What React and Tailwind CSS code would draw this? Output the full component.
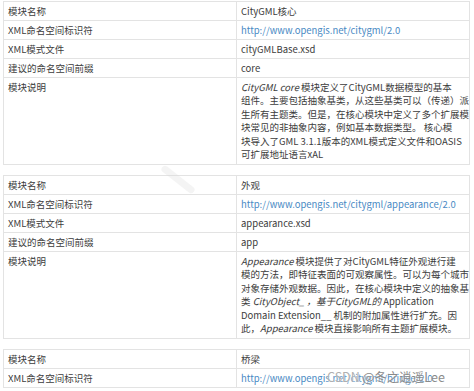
import React from "react";

const Row = ({ label, children, last }) => (
  <div className={`grid grid-cols-[233px_232px] ${last ? "" : "border-b border-[#e3e3e3]"}`}>
    <div className="border-r border-[#e3e3e3] px-[4px] h-[18px] leading-[18px] whitespace-nowrap">{label}</div>
    <div className="px-[4px] h-[18px] leading-[18px] whitespace-nowrap">{children}</div>
  </div>
);

const DescRow = ({ lines }) => (
  <div className="grid grid-cols-[233px_232px]">
    <div className="border-r border-[#e3e3e3] px-[4px] pt-[3px] leading-[13.5px] whitespace-nowrap">模块说明</div>
    <div className="px-[4px] py-[2.5px] leading-[13.5px]">
      {lines.map((l, i) => (
        <div key={i} className="whitespace-nowrap">{l}</div>
      ))}
    </div>
  </div>
);

const Link = ({ children }) => <span className="text-[#4a8ac4]">{children}</span>;

export default function App() {
  return (
    <div className="relative w-[474px] h-[391px] overflow-hidden bg-white font-['Noto_Sans_CJK_SC',sans-serif] text-[9.5px] text-[#3c3c3c]">
      <div className="pt-[1px] pl-[3px] flex flex-col gap-[10px]">
        <div className="w-[467px] border border-[#e3e3e3]">
          <Row label="模块名称">CityGML核心</Row>
          <Row label="XML命名空间标识符"><Link>http://www.opengis.net/citygml/2.0</Link></Row>
          <Row label="XML模式文件">cityGMLBase.xsd</Row>
          <Row label="建议的命名空间前缀">core</Row>
          <DescRow
            lines={[
              <><i>CityGML core</i> 模块定义了CityGML数据模型的基本</>,
              <>组件。主要包括抽象基类，从这些基类可以（传递）派</>,
              <>生所有主题类。但是，在核心模块中定义了多个扩展模</>,
              <>块常见的非抽象内容，例如基本数据类型。 核心模</>,
              <>块导入了GML 3.1.1版本的XML模式定义文件和OASIS</>,
              <>可扩展地址语言xAL</>,
            ]}
          />
        </div>
        <div className="w-[467px] border border-[#e3e3e3]">
          <Row label="模块名称">外观</Row>
          <Row label="XML命名空间标识符"><Link>http://www.opengis.net/citygml/appearance/2.0</Link></Row>
          <Row label="XML模式文件">appearance.xsd</Row>
          <Row label="建议的命名空间前缀">app</Row>
          <DescRow
            lines={[
              <><i>Appearance</i> 模块提供了对CityGML特征外观进行建</>,
              <>模的方法，即特征表面的可观察属性。可以为每个城市</>,
              <>对象存储外观数据。因此，在核心模块中定义的抽象基</>,
              <>类 <i>CityObject_ ，基于CityGML的</i> Application</>,
              <>Domain Extension__ 机制的附加属性进行扩充。因</>,
              <>此，<i>Appearance</i> 模块直接影响所有主题扩展模块。</>,
            ]}
          />
        </div>
        <div className="w-[467px] border border-[#e3e3e3] border-b-0">
          <Row label="模块名称">桥梁</Row>
          <Row label="XML命名空间标识符"><Link>http://www.opengis.net/citygml/bridge/2.0</Link></Row>
        </div>
      </div>
      <div className="pointer-events-none absolute left-[158px] top-[176px] h-[7px] w-[40px] rotate-[38deg] rounded-full bg-[#dcdcdc] opacity-30" />
      <div className="pointer-events-none absolute left-[327px] top-[369px] whitespace-nowrap text-[12.5px] leading-[16px] text-[#8a8a8a] [text-shadow:0_0_2px_#fff]">
        <span className="text-[#b0b0b0]">CSDN</span> @冬之逍遥Lee
      </div>
    </div>
  );
}
